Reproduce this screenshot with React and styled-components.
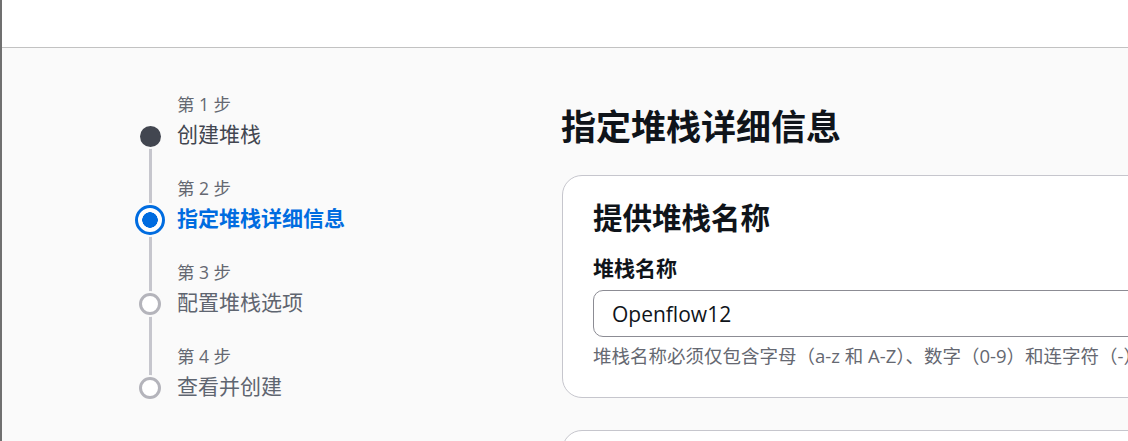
import React from "react"
import styled, { createGlobalStyle } from "styled-components"

const GlobalStyle = createGlobalStyle`
    html, body{
        margin: 0;
        padding: 0;
        overflow: hidden;
        background-color: #FAFAFA;
    }
    body{
        font-family: "Open Sans", "Noto Sans CJK SC", sans-serif;
        color: #0F141A;
    }
`

const steps = [
    { num: 1, titulo: "创建堆栈", estado: "feito" },
    { num: 2, titulo: "指定堆栈详细信息", estado: "atual" },
    { num: 3, titulo: "配置堆栈选项", estado: "pendente" },
    { num: 4, titulo: "查看并创建", estado: "pendente" },
]

function Passo({ passo, primeiro, ultimo }){
    return(
        <StepItem>
            <Rail primeiro={primeiro} ultimo={ultimo}>
                <Marker estado={passo.estado} />
            </Rail>
            <StepLabel>第 {passo.num} 步</StepLabel>
            <StepTitle estado={passo.estado}>{passo.titulo}</StepTitle>
        </StepItem>
    )
}

export default function App(){
    return(
        <Pagina>
            <GlobalStyle />
            <TopBar />
            <Conteudo>
                <Sidebar>
                    {steps.map((p, i) => (
                        <Passo key={p.num} passo={p} primeiro={i === 0} ultimo={i === steps.length - 1} />
                    ))}
                </Sidebar>
                <Main>
                    <PageTitle>指定堆栈详细信息</PageTitle>
                    <Card>
                        <CardHeading>提供堆栈名称</CardHeading>
                        <FieldLabel>堆栈名称</FieldLabel>
                        <Input type="text" defaultValue="Openflow12" />
                        <Hint>堆栈名称必须仅包含字母（a-z 和 A-Z）、数字（0-9）和连字符（-）。</Hint>
                    </Card>
                    <Card />
                </Main>
            </Conteudo>
        </Pagina>
    )
}

const Pagina = styled.div`
    min-height: 100vh;
    box-sizing: border-box;
    border-left: 2px solid #707070;
`

const TopBar = styled.div`
    height: 47px;
    background-color: #FFFFFF;
    border-bottom: 1px solid #C2C2C2;
`

const Conteudo = styled.div`
    display: flex;
    padding-left: 133px;
`

const Sidebar = styled.div`
    width: 427px;
    flex-shrink: 0;
    padding-top: 44px;
`

const StepItem = styled.div`
    display: grid;
    grid-template-columns: 30px 1fr;
    grid-template-rows: 24px 36px 24px;
    column-gap: 12px;
`

const Rail = styled.div`
    grid-column: 1;
    grid-row: 1 / span 3;
    display: grid;
    grid-template-rows: 24px 36px 1fr;
    justify-items: center;
    background-image: linear-gradient(#C6C6CD, #C6C6CD);
    background-repeat: no-repeat;
    background-size: ${p => p.primeiro ? "3px calc(100% - 42px)" : p.ultimo ? "3px 42px" : "3px 100%"};
    background-position: ${p => p.primeiro ? "center bottom" : "center top"};
`

const Marker = styled.span`
    grid-row: 2;
    align-self: center;
    box-sizing: border-box;
    border-radius: 50%;
    margin-top: ${p => p.estado === "feito" ? "5px" : "3px"};
    box-shadow: 0 0 0 2px #FAFAFA;
    width: ${p => p.estado === "atual" ? "30px" : p.estado === "feito" ? "21px" : "22px"};
    height: ${p => p.estado === "atual" ? "30px" : p.estado === "feito" ? "21px" : "22px"};
    background: ${p => p.estado === "feito"
        ? "#424650"
        : p.estado === "atual"
            ? "radial-gradient(circle, #006CE0 0 7.5px, #FFFFFF 8px)"
            : "#FFFFFF"};
    border: ${p => p.estado === "feito" ? "none" : p.estado === "atual" ? "3px solid #006CE0" : "3px solid #B4B4BB"};
`

const StepLabel = styled.div`
    grid-column: 2;
    grid-row: 1;
    font-size: 17.5px;
    line-height: 24px;
    color: #656871;
`

const StepTitle = styled.div`
    grid-column: 2;
    grid-row: 2;
    font-size: 21px;
    line-height: 36px;
    font-weight: ${p => p.estado === "atual" ? 700 : 400};
    color: ${p => p.estado === "atual" ? "#006CE0" : p.estado === "feito" ? "#424650" : "#5F6570"};
`

const Main = styled.div`
    width: 820px;
    flex-shrink: 0;
    padding-top: 57px;
`

const PageTitle = styled.h1`
    margin: 0 0 26px -1px;
    font-size: 35px;
    line-height: 44px;
    font-weight: 700;
    color: #0F141A;
`

const Card = styled.div`
    box-sizing: border-box;
    background-color: #FFFFFF;
    border: 1px solid #C6C6CD;
    border-radius: 20px;
    padding: 24px 30px 30px 30px;
    margin-bottom: 32px;
    min-height: 100px;
`

const CardHeading = styled.h2`
    margin: 0 0 18px 0;
    font-size: 29.5px;
    line-height: 36px;
    font-weight: 700;
    color: #0F141A;
`

const FieldLabel = styled.div`
    font-size: 21px;
    line-height: 28px;
    font-weight: 700;
    color: #0F141A;
    margin-bottom: 8px;
`

const Input = styled.input`
    display: block;
    box-sizing: border-box;
    width: 100%;
    height: 47px;
    padding: 0 18px;
    border: 1px solid #8C8C94;
    border-radius: 10px;
    font-family: "Open Sans", "Noto Sans CJK SC", sans-serif;
    font-size: 21px;
    color: #0F141A;
    background-color: #FFFFFF;
    outline: none;
`

const Hint = styled.div`
    margin-top: 8px;
    font-size: 18.5px;
    line-height: 22px;
    color: #656871;
    white-space: nowrap;
`
